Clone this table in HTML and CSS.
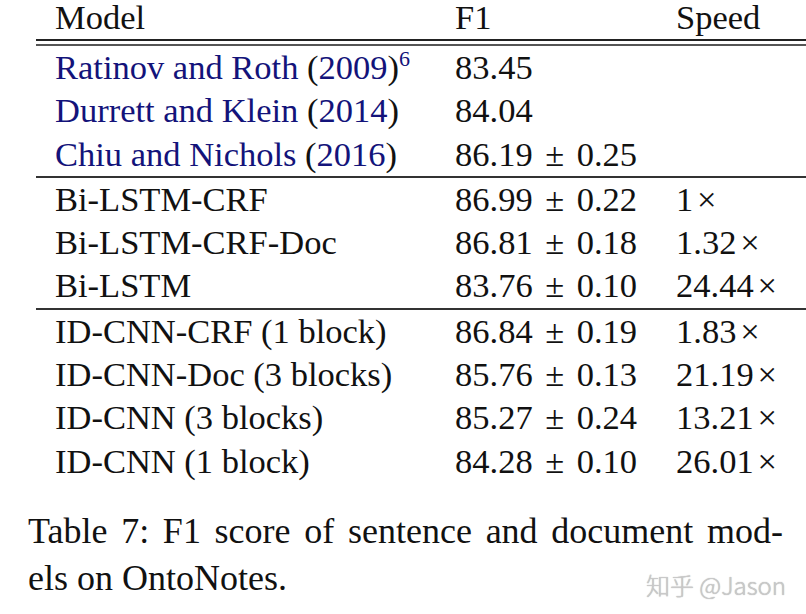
FILE: index.html
```html
<!DOCTYPE html>
<html>
<head>
<meta charset="utf-8">
<link rel="stylesheet" href="styles.css">
</head>
<body>
<div class="page">
  <div class="table">
    <div class="row head">
      <div>Model</div><div>F1</div><div>Speed</div>
    </div>
    <div class="double-rule"></div>
    <div class="group">
      <div class="row"><div><span class="cite">Ratinov and Roth</span> (<span class="cite">2009</span>)<sup class="cite">6</sup></div><div>83.45</div><div></div></div>
      <div class="row"><div><span class="cite">Durrett and Klein</span> (<span class="cite">2014</span>)</div><div>84.04</div><div></div></div>
      <div class="row"><div><span class="cite">Chiu and Nichols</span> (<span class="cite">2016</span>)</div><div>86.19<span class="pm">±</span>0.25</div><div></div></div>
    </div>
    <div class="group">
      <div class="row"><div>Bi-LSTM-CRF</div><div>86.99<span class="pm">±</span>0.22</div><div>1<span class="x">×</span></div></div>
      <div class="row"><div>Bi-LSTM-CRF-Doc</div><div>86.81<span class="pm">±</span>0.18</div><div>1.32<span class="x">×</span></div></div>
      <div class="row"><div>Bi-LSTM</div><div>83.76<span class="pm">±</span>0.10</div><div>24.44<span class="x">×</span></div></div>
    </div>
    <div class="group">
      <div class="row"><div>ID-CNN-CRF (1 block)</div><div>86.84<span class="pm">±</span>0.19</div><div>1.83<span class="x">×</span></div></div>
      <div class="row"><div>ID-CNN-Doc (3 blocks)</div><div>85.76<span class="pm">±</span>0.13</div><div>21.19<span class="x">×</span></div></div>
      <div class="row"><div>ID-CNN (3 blocks)</div><div>85.27<span class="pm">±</span>0.24</div><div>13.21<span class="x">×</span></div></div>
      <div class="row"><div>ID-CNN (1 block)</div><div>84.28<span class="pm">±</span>0.10</div><div>26.01<span class="x">×</span></div></div>
    </div>
  </div>
  <div class="caption">
    <span class="line first">Table 7: F1 score of sentence and document mod-</span>
    <span class="line">els on OntoNotes.</span>
    <span class="watermark">知乎 @Jason</span>
  </div>
</div>
</body>
</html>
```

FILE: styles.css
```css
html, body {
  margin: 0;
  padding: 0;
  background: #ffffff;
}
body {
  width: 806px;
  height: 614px;
  overflow: hidden;
  font-family: "Liberation Serif", "Times New Roman", serif;
  color: #111111;
}
.page {
  position: relative;
  width: 806px;
  height: 614px;
}
.table {
  margin-left: 36px;
  font-size: 34.5px;
}
.row {
  display: grid;
  grid-template-columns: 400px 221px 1fr;
  padding-left: 19px;
  line-height: 43.3px;
  white-space: nowrap;
}
.row.head {
  line-height: 34px;
  height: 34px;
}
.double-rule {
  margin-top: 5px;
  height: 3px;
  border-top: 2px solid #222222;
  border-bottom: 2px solid #555555;
}
.group + .group {
  border-top: 2px solid #333333;
}
.cite {
  color: #13137a;
}
.pm {
  display: inline-block;
  width: 44px;
  text-align: center;
}
.x {
  display: inline-block;
  width: 27px;
  text-align: center;
}
sup {
  font-size: 22px;
  line-height: 0;
  vertical-align: 13px;
}
.caption {
  position: relative;
  margin-top: 25px;
  margin-left: 28px;
  width: 755px;
  font-size: 36px;
  line-height: 47px;
}
.line {
  display: block;
}
.line.first {
  text-align: justify;
  text-align-last: justify;
}
.watermark {
  position: absolute;
  right: -3px;
  bottom: 2px;
  font-family: "Noto Sans CJK SC", "Noto Sans", sans-serif;
  font-weight: 300;
  font-size: 24px;
  line-height: 30px;
  color: #c9c9c9;
  text-shadow: 0 0 1px #a8a8a8;
}
```
